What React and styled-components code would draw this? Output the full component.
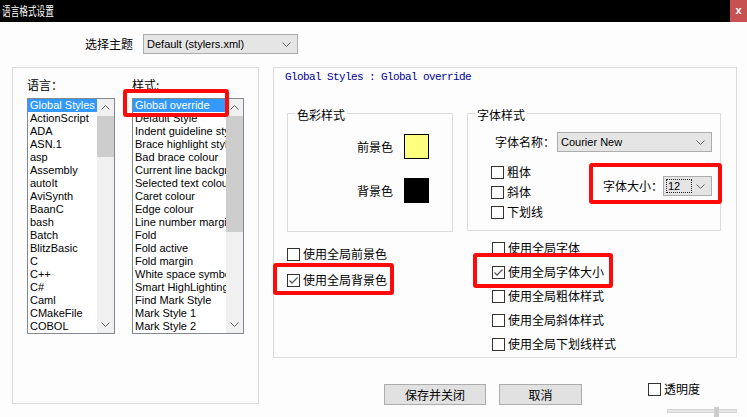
import React from 'react';
import styled, { createGlobalStyle } from 'styled-components';

const CJK = `"Noto Sans CJK SC", "Liberation Sans", sans-serif`;
const UI = `"Liberation Sans", "Noto Sans CJK SC", sans-serif`;

const GlobalStyle = createGlobalStyle`
  html, body { margin: 0; padding: 0; background: #fdfdfd; overflow: hidden; }
  body { width: 747px; height: 417px; font-family: ${CJK}; font-size: 12px; color: #000; }
`;

const Window = styled.div`
  width: 747px;
  height: 417px;
  overflow: hidden;
  background: #fdfdfd;
`;

const TitleBar = styled.div`
  height: 22px;
  background: #000;
  display: flex;
  align-items: center;
  justify-content: space-between;
`;

const Title = styled.span`
  display: inline-block;
  color: #fff;
  font: 12px/22px ${CJK};
  margin-left: 2px;
  transform: scaleX(0.72);
  transform-origin: left center;
`;

const CloseBtn = styled.div`
  width: 17px;
  height: 22px;
  background: #c75050;
  color: #fff;
  font: bold 11px/20px ${UI};
  text-align: center;
`;

const ThemeRow = styled.div`
  display: flex;
  align-items: center;
  gap: 10px;
  padding: 12px 0 0 85px;
  height: 20px;
`;

const Label = styled.span`
  font: 12px/16px ${CJK};
  white-space: nowrap;
`;

const Select = styled.div`
  box-sizing: border-box;
  width: ${(p) => p.$w}px;
  height: 20px;
  background: #e5e5e5;
  border: 1px solid #adadad;
  display: flex;
  align-items: center;
  justify-content: space-between;
  padding: 0 6px 0 ${(p) => p.$pl ?? 3}px;
  font: 11px/16px ${UI};
  white-space: nowrap;
`;

const FocusText = styled.span`
  box-sizing: border-box;
  width: 26px;
  height: 14px;
  border: 1px dotted #222;
  font: 11px/12px ${UI};
  padding-left: 1px;
`;

const Chevron = ({ up }) => (
  <svg width="9" height="5" viewBox="0 0 9 5">
    <polyline
      points={up ? '0.5,4.5 4.5,0.5 8.5,4.5' : '0.5,0.5 4.5,4.5 8.5,0.5'}
      fill="none"
      stroke="#606060"
      strokeWidth="1"
    />
  </svg>
);

const Main = styled.div`
  display: flex;
  align-items: flex-start;
  gap: 14px;
  margin-top: 13px;
  padding-left: 12px;
`;

const LeftGroup = styled.div`
  box-sizing: border-box;
  width: 247px;
  height: 337px;
  border: 1px solid #dcdcdc;
  display: flex;
  gap: 17px;
  padding: 9px 0 0 14px;
`;

const ListColumn = styled.div`
  display: flex;
  flex-direction: column;
  gap: 5px;
`;

const ListBox = styled.div`
  position: relative;
  box-sizing: border-box;
  width: ${(p) => p.$w}px;
  height: 236px;
  border: 1px solid #828790;
  background: #fff;
  display: flex;
`;

const Items = styled.div`
  flex: 1;
  overflow: hidden;
`;

const Item = styled.div`
  height: 13px;
  line-height: 13px;
  font-size: 11px;
  font-family: ${UI};
  padding-left: 2px;
  white-space: nowrap;
  background: ${(p) => (p.$selected ? '#3399ff' : 'transparent')};
  color: ${(p) => (p.$selected ? '#fff' : '#000')};
`;

const ScrollBar = styled.div`
  width: 17px;
  display: flex;
  flex-direction: column;
  background: #f0f0f0;
`;

const ScrollArrow = styled.div`
  height: 17px;
  display: flex;
  align-items: center;
  justify-content: center;
`;

const Track = styled.div`
  flex: 1;
`;

const Thumb = styled.div`
  height: ${(p) => p.$size}px;
  background: #cdcdcd;
`;

const Mark = styled.span`
  position: absolute;
  left: ${(p) => p.$x}px;
  top: ${(p) => p.$y}px;
  width: ${(p) => p.$w}px;
  height: ${(p) => p.$h}px;
  box-sizing: border-box;
  border: 4px solid #ff0a0a;
  border-radius: 3px;
  pointer-events: none;
`;

const RightColumn = styled.div`
  width: 464px;
  display: flex;
  flex-direction: column;
`;

const Panel = styled.div`
  box-sizing: border-box;
  width: 464px;
  height: 291px;
  border: 1px solid #dcdcdc;
  padding-top: 3px;
`;

const PanelHeader = styled.div`
  margin-left: 11px;
  font: 11px/12px "Liberation Mono", monospace;
  letter-spacing: -0.6px;
  color: #000099;
  white-space: nowrap;
`;

const GroupRow = styled.div`
  display: flex;
  align-items: flex-start;
  gap: 14px;
  margin: 30px 0 0 13px;
`;

const GroupBox = styled.div`
  position: relative;
  box-sizing: border-box;
  width: ${(p) => p.$w}px;
  height: ${(p) => p.$h}px;
  border: 1px solid #dcdcdc;
`;

const Legend = styled.span`
  position: absolute;
  top: -7px;
  left: 7px;
  padding: 0 2px;
  background: #fdfdfd;
  font: 12px/16px ${CJK};
`;

const ColorRows = styled.div`
  display: flex;
  flex-direction: column;
  align-items: flex-end;
  gap: 19px;
  padding: 20px 23px 0 0;
`;

const ColorRow = styled.div`
  display: flex;
  align-items: center;
  gap: 11px;
`;

const Swatch = styled.div`
  box-sizing: border-box;
  width: 25px;
  height: 25px;
  border: 1px solid #000;
  background: ${(p) => p.$color};
`;

const FontBody = styled.div`
  padding: 18px 8px 0 23px;
`;

const NameRow = styled.div`
  display: flex;
  align-items: center;
  gap: 2px;
  margin-left: 4px;
`;

const FontLower = styled.div`
  display: flex;
  justify-content: space-between;
  align-items: flex-start;
  margin-top: 10px;
`;

const CheckList = styled.div`
  display: flex;
  flex-direction: column;
  padding-top: ${(p) => p.$pt ?? 0}px;
  width: ${(p) => (p.$w ? `${p.$w}px` : 'auto')};
`;

const Check = styled.div`
  position: relative;
  display: flex;
  align-items: center;
  gap: 3px;
  height: ${(p) => p.$h}px;
  font: 12px/16px ${CJK};
  white-space: nowrap;
`;

const Box = styled.span`
  box-sizing: border-box;
  width: 13px;
  height: 13px;
  border: 1px solid #333;
  background: #fff;
  display: flex;
  align-items: center;
  justify-content: center;
`;

const SizeRow = styled.div`
  position: relative;
  display: flex;
  align-items: center;
  margin-top: 14px;
`;

const BottomChecks = styled.div`
  display: flex;
  margin-left: 13px;
`;

const Footer = styled.div`
  display: flex;
  align-items: flex-start;
  margin-top: 26px;
  padding-left: 111px;
  gap: 13px;
`;

const Button = styled.div`
  box-sizing: border-box;
  width: ${(p) => p.$w}px;
  height: 21px;
  background: #e1e1e1;
  border: 1px solid #adadad;
  display: flex;
  align-items: center;
  justify-content: center;
  font: 12px/16px ${CJK};
`;

const Opacity = styled.div`
  margin-left: auto;
  margin-top: -3px;
  width: 89px;
  display: flex;
  flex-direction: column;
`;

const Slider = styled.div`
  position: relative;
  margin: 10px 0 0 19px;
  width: 70px;
  height: 12px;
`;

const SliderTrack = styled.div`
  box-sizing: border-box;
  margin-top: 2px;
  height: 4px;
  background: #e7e7e7;
  border: 1px solid #d6d6d6;
`;

const SliderThumb = styled.div`
  position: absolute;
  left: 47px;
  top: 0;
  width: 5px;
  height: 12px;
  background: #cdcdcd;
`;

const CheckMark = () => (
  <svg width="11" height="11" viewBox="0 0 11 11">
    <polyline points="1.5,5.5 4,8 9.5,2.5" fill="none" stroke="#5a5a5a" strokeWidth="1.3" />
  </svg>
);

const CheckItem = ({ label, checked, h, children }) => (
  <Check $h={h}>
    <Box>{checked && <CheckMark />}</Box>
    <span>{label}</span>
    {children}
  </Check>
);

const languages = [
  'Global Styles', 'ActionScript', 'ADA', 'ASN.1', 'asp', 'Assembly', 'autoIt',
  'AviSynth', 'BaanC', 'bash', 'Batch', 'BlitzBasic', 'C', 'C++', 'C#', 'Caml',
  'CMakeFile', 'COBOL',
];

const styles = [
  'Global override', 'Default Style', 'Indent guideline style', 'Brace highlight style',
  'Bad brace colour', 'Current line background colour', 'Selected text colour',
  'Caret colour', 'Edge colour', 'Line number margin', 'Fold', 'Fold active',
  'Fold margin', 'White space symbol', 'Smart HighLighting', 'Find Mark Style',
  'Mark Style 1', 'Mark Style 2',
];

const List = ({ items, width, thumb, children }) => (
  <ListBox $w={width}>
    <Items>
      {items.map((it, i) => (
        <Item key={it} $selected={i === 0}>{it}</Item>
      ))}
    </Items>
    <ScrollBar>
      <ScrollArrow><Chevron up /></ScrollArrow>
      <Track><Thumb $size={thumb} /></Track>
      <ScrollArrow><Chevron /></ScrollArrow>
    </ScrollBar>
    {children}
  </ListBox>
);

export default function App() {
  return (
    <Window>
      <GlobalStyle />
      <TitleBar>
        <Title>语言格式设置</Title>
        <CloseBtn>x</CloseBtn>
      </TitleBar>

      <ThemeRow>
        <Label>选择主题</Label>
        <Select $w={155}>
          <span>Default (stylers.xml)</span>
          <Chevron />
        </Select>
      </ThemeRow>

      <Main>
        <LeftGroup>
          <ListColumn>
            <Label>语言：</Label>
            <List items={languages} width={88} thumb={41} />
          </ListColumn>
          <ListColumn>
            <Label>样式:</Label>
            <List items={styles} width={112} thumb={116}>
              <Mark $x={-10} $y={-10} $w={106} $h={28} />
            </List>
          </ListColumn>
        </LeftGroup>

        <RightColumn>
          <Panel>
            <PanelHeader>Global Styles : Global override</PanelHeader>
            <GroupRow>
              <GroupBox $w={166} $h={119}>
                <Legend>色彩样式</Legend>
                <ColorRows>
                  <ColorRow>
                    <Label>前景色</Label>
                    <Swatch $color="#ffff80" />
                  </ColorRow>
                  <ColorRow>
                    <Label>背景色</Label>
                    <Swatch $color="#000" />
                  </ColorRow>
                </ColorRows>
              </GroupBox>

              <GroupBox $w={254} $h={118}>
                <Legend>字体样式</Legend>
                <FontBody>
                  <NameRow>
                    <Label>字体名称：</Label>
                    <Select $w={155}>
                      <span>Courier New</span>
                      <Chevron />
                    </Select>
                  </NameRow>
                  <FontLower>
                    <CheckList>
                      <CheckItem h={20} label="粗体" />
                      <CheckItem h={20} label="斜体" />
                      <CheckItem h={20} label="下划线" />
                    </CheckList>
                    <SizeRow>
                      <Label>字体大小：</Label>
                      <Select $w={49} $pl={2}>
                        <FocusText>12</FocusText>
                        <Chevron />
                      </Select>
                      <Mark $x={-14} $y={-13} $w={133} $h={41} />
                    </SizeRow>
                  </FontLower>
                </FontBody>
              </GroupBox>
            </GroupRow>

            <BottomChecks>
              <CheckList $pt={9} $w={205}>
                <CheckItem h={26} label="使用全局前景色" />
                <CheckItem h={26} label="使用全局背景色" checked>
                  <Mark $x={-14} $y={-4} $w={121} $h={32} />
                </CheckItem>
              </CheckList>
              <CheckList $pt={4}>
                <CheckItem h={24} label="使用全局字体" />
                <CheckItem h={24} label="使用全局字体大小" checked>
                  <Mark $x={-19} $y={-7} $w={140} $h={35} />
                </CheckItem>
                <CheckItem h={24} label="使用全局粗体样式" />
                <CheckItem h={24} label="使用全局斜体样式" />
                <CheckItem h={24} label="使用全局下划线样式" />
              </CheckList>
            </BottomChecks>
          </Panel>

          <Footer>
            <Button $w={102}>保存并关闭</Button>
            <Button $w={83}>取消</Button>
            <Opacity>
              <CheckItem h={16} label="透明度" />
              <Slider>
                <SliderTrack />
                <SliderThumb />
              </Slider>
            </Opacity>
          </Footer>
        </RightColumn>
      </Main>
    </Window>
  );
}
